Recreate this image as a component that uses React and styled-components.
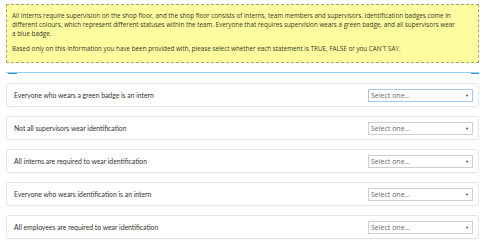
import React from 'react';
import styled, { createGlobalStyle } from 'styled-components';

const GlobalStyle = createGlobalStyle`
  html, body {
    margin: 0;
    padding: 0;
    background: #ffffff;
  }
  body {
    font-family: Lato, "Noto Sans", "Liberation Sans", sans-serif;
    color: #333333;
  }
`;

const statements = [
  'Everyone who wears a green badge is an intern',
  'Not all supervisors wear identification',
  'All interns are required to wear identification',
  'Everyone who wears identification is an intern',
  'All employees are required to wear identification',
];

const App = () => {
  return (
    <>
      <GlobalStyle />
      <Page>
        <Notice>
          <p>
            All interns require supervision on the shop floor, and the shop floor consists of interns, team members and
            supervisors. Identification badges come in different colours, which represent different statuses within the
            team. Everyone that requires supervision wears a green badge, and all supervisors wear a{'\u00A0'}blue badge.
          </p>
          <p>
            Based only on this information you have been provided with, please select whether each statement is TRUE,
            FALSE or you CAN'T SAY.
          </p>
        </Notice>

        <Divider />

        <List>
          {statements.map((text, i) => (
            <Row key={text}>
              <Statement>{text}</Statement>
              <Picker focused={i === 0}>
                <span>Select one...</span>
                <Arrow>▼</Arrow>
              </Picker>
            </Row>
          ))}
        </List>
      </Page>
    </>
  );
};

const Page = styled.div`
  width: 480px;
  height: 240px;
  box-sizing: border-box;
  padding: 4px 1px 0 6px;
  overflow: hidden;
`;

const Notice = styled.div`
  background: #fdfc9e;
  border: 1px dashed #a9a276;
  padding: 6px 10px 9px 5px;
  font-family: "Open Sans", "Noto Sans", sans-serif;
  font-size: 6.3px;
  line-height: 9px;
  color: #3a3a2a;

  p {
    margin: 0;
  }
  p + p {
    margin-top: 6px;
  }
`;

const Divider = styled.div`
  position: relative;
  margin-top: 9px;
  height: 1px;
  background: #8fd3f2;

  &::before,
  &::after {
    content: '';
    position: absolute;
    top: 1px;
    height: 1px;
    background: #3b8fcf;
  }
  &::before {
    left: 2px;
    width: 9px;
  }
  &::after {
    right: 0;
    width: 8px;
  }
`;

const List = styled.div`
  display: flex;
  flex-direction: column;
  gap: 9px;
  margin-top: 10px;
`;

const Row = styled.div`
  display: flex;
  align-items: center;
  justify-content: space-between;
  height: 24px;
  box-sizing: border-box;
  padding: 0 5px 0 7px;
  background: #ffffff;
  border: 1px solid #e6e6e6;
  border-radius: 3px;
  box-shadow: 0 1px 1px rgba(0, 0, 0, 0.03);
`;

const Statement = styled.span`
  font-size: 6.8px;
  color: #333333;
`;

const Picker = styled.div`
  display: flex;
  align-items: center;
  justify-content: space-between;
  width: 105px;
  height: 13px;
  box-sizing: border-box;
  padding: 0 3px 0 2px;
  border: 1px solid ${({ focused }) => (focused ? '#a9c7ee' : '#cfcfcf')};
  background: #ffffff;
  font-family: "Open Sans", "Noto Sans", sans-serif;
  font-size: 7px;
  color: #6a6a6a;
`;

const Arrow = styled.span`
  font-size: 4px;
  color: #444444;
`;

export default App;
